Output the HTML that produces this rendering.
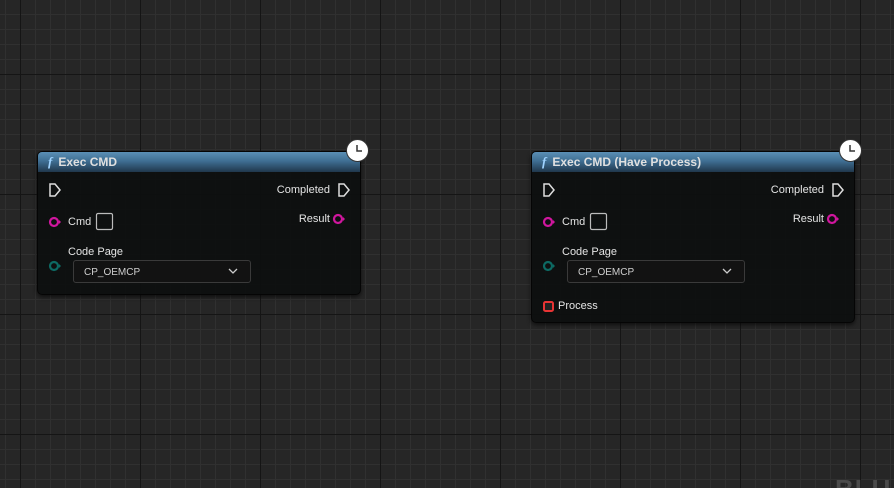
<!DOCTYPE html><html><head><style>
html,body{margin:0;width:894px;height:488px;overflow:hidden}
body{background:#262626;font-family:"Liberation Sans",sans-serif;position:relative;
background-image:
linear-gradient(90deg,transparent 20px,#151515 20px,#151515 21px,transparent 21px),
linear-gradient(180deg,transparent 74px,#151515 74px,#151515 75px,transparent 75px),
linear-gradient(90deg,transparent 5px,#303030 5px,#303030 6px,transparent 6px),
linear-gradient(180deg,transparent 14px,#303030 14px,#303030 15px,transparent 15px);
background-size:120px 120px,120px 120px,15px 15px,15px 15px;}
.node{position:absolute;background:rgba(14,16,16,0.96);border:1px solid #050505;border-radius:5px;box-shadow:0 2px 4px rgba(0,0,0,.6);}
.hdr{height:20px;border-radius:4px 4px 0 0;background:linear-gradient(180deg,#5a8fb5 0%,#3f6f93 45%,#20384c 100%);color:#e0e0e0;font-weight:bold;font-size:12px;line-height:20px;padding-left:10px}
.hdr i{color:#9fd3ff;font-family:"Liberation Serif",serif;margin-right:6px;font-size:13px}
.t{position:absolute;color:#e4e4e4;font-size:11px}
.clock{position:absolute;width:21px;height:21px;border-radius:50%;background:#fff;border:1px solid #333}
.dd{position:absolute;width:178px;height:23px;border:1px solid #3a3a3a;border-radius:3px;background:#121212;color:#cfcfcf;font-size:10px;line-height:23px;box-sizing:border-box;padding-left:10px}
.dd svg{position:absolute;right:12px;top:7px}
</style></head><body>

<div class="node" style="left:37px;top:151px;width:322px;height:142px">
<div class="hdr"><i>f</i>Exec CMD</div>
<svg style="position:absolute;left:0;top:0" width="322" height="142">
<path d="M12 32h5l5 6-5 6h-5z" fill="none" stroke="#ddd" stroke-width="1.5"/>
<path d="M301 32h5l5 6-5 6h-5z" fill="none" stroke="#ddd" stroke-width="1.5"/>
<circle cx="16" cy="70" r="4" fill="none" stroke="#d0169e" stroke-width="2.2"/><path d="M21 68l2 2-2 2z" fill="#d0169e"/>
<circle cx="300" cy="67" r="4" fill="none" stroke="#d0169e" stroke-width="2.2"/><path d="M305 65l2 2-2 2z" fill="#d0169e"/>
<circle cx="16" cy="114" r="4" fill="none" stroke="#0d6a63" stroke-width="2.2"/><path d="M21 112l2 2-2 2z" fill="#0d6a63"/>
<rect x="58.5" y="61.5" width="16" height="16" rx="1.5" fill="none" stroke="#bbb" stroke-width="1.2"/>
</svg>
<div class="t" style="left:30px;top:64px">Cmd</div>
<div class="t" style="right:30px;top:32px">Completed</div>
<div class="t" style="right:30px;top:61px">Result</div>
<div class="t" style="left:30px;top:94px">Code Page</div>
<div class="dd" style="left:35px;top:108px">CP_OEMCP<svg width="10" height="7"><path d="M1 1l4 4 4-4" fill="none" stroke="#ccc" stroke-width="1.3"/></svg></div>
</div>
<div class="clock" style="left:346px;top:139px"><svg width="21" height="21"><path d="M10 5v6h5" fill="none" stroke="#333" stroke-width="1.5"/></svg></div>

<div class="node" style="left:531px;top:151px;width:322px;height:170px">
<div class="hdr"><i>f</i>Exec CMD (Have Process)</div>
<svg style="position:absolute;left:0;top:0" width="322" height="170">
<path d="M12 32h5l5 6-5 6h-5z" fill="none" stroke="#ddd" stroke-width="1.5"/>
<path d="M301 32h5l5 6-5 6h-5z" fill="none" stroke="#ddd" stroke-width="1.5"/>
<circle cx="16" cy="70" r="4" fill="none" stroke="#d0169e" stroke-width="2.2"/><path d="M21 68l2 2-2 2z" fill="#d0169e"/>
<circle cx="300" cy="67" r="4" fill="none" stroke="#d0169e" stroke-width="2.2"/><path d="M305 65l2 2-2 2z" fill="#d0169e"/>
<circle cx="16" cy="114" r="4" fill="none" stroke="#0d6a63" stroke-width="2.2"/><path d="M21 112l2 2-2 2z" fill="#0d6a63"/>
<rect x="58.5" y="61.5" width="16" height="16" rx="1.5" fill="none" stroke="#bbb" stroke-width="1.2"/>
<rect x="12" y="150" width="9" height="9" rx="1.5" fill="#222" stroke="#e83434" stroke-width="2"/>
</svg>
<div class="t" style="left:30px;top:64px">Cmd</div>
<div class="t" style="right:30px;top:32px">Completed</div>
<div class="t" style="right:30px;top:61px">Result</div>
<div class="t" style="left:30px;top:94px">Code Page</div>
<div class="dd" style="left:35px;top:108px">CP_OEMCP<svg width="10" height="7"><path d="M1 1l4 4 4-4" fill="none" stroke="#ccc" stroke-width="1.3"/></svg></div>
<div class="t" style="left:26px;top:148px">Process</div>
</div>
<div class="clock" style="left:839px;top:139px"><svg width="21" height="21"><path d="M10 5v6h5" fill="none" stroke="#333" stroke-width="1.5"/></svg></div>

<div style="position:absolute;left:835px;top:476px;width:59px;height:12px;overflow:hidden"><div style="color:#4a4a4a;font-weight:bold;font-size:26px;line-height:26px;letter-spacing:1px">BLU</div></div>
</body></html>
